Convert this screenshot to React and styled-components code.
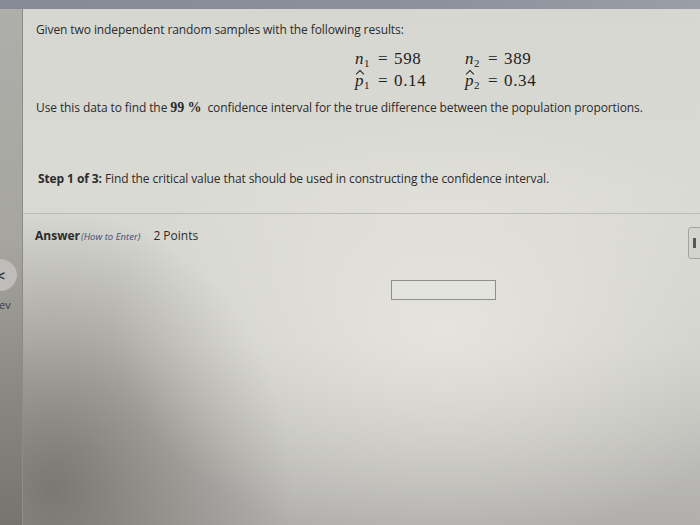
import React from "react";
import styled, { createGlobalStyle } from "styled-components";

const GlobalStyle = createGlobalStyle`
  html, body {
    margin: 0;
    padding: 0;
    width: 700px;
    height: 525px;
    overflow: hidden;
    background: #9c9a95;
  }
`;

const Screen = styled.div`
  width: 700px;
  height: 525px;
  display: flex;
  flex-direction: column;
  font-family: "Open Sans", "Liberation Sans", sans-serif;
  color: #2b2b2d;
`;

const TopBar = styled.div`
  height: 9px;
  background: linear-gradient(90deg, #858a94 0%, #8c909b 60%, #9a9ea6 100%);
`;

const Body = styled.div`
  flex: 1;
  display: flex;
`;

const LeftRail = styled.div`
  width: 22px;
  background: linear-gradient(180deg, #aeaeaa 0%, #a6a5a0 45%, #8a8782 75%, #77746f 100%);
  border-right: 1px solid #8d8c88;
  display: flex;
  flex-direction: column;
  padding-top: 250px;
  overflow: hidden;
`;

const NavCircle = styled.div`
  width: 34px;
  height: 32px;
  margin-left: -17px;
  border-radius: 50%;
  background: #bebdb9;
  display: flex;
  align-items: center;
  justify-content: flex-end;
  padding-right: 12px;
  box-sizing: border-box;
  font-size: 15px;
  font-weight: 700;
  color: #3a3a3c;
`;

const NavLabel = styled.div`
  margin-top: 6px;
  margin-left: -1px;
  font-size: 11px;
  color: #3c3c3e;
`;

const Panel = styled.div`
  flex: 1;
  position: relative;
  display: flex;
  flex-direction: column;
  background:
    radial-gradient(ellipse 330px 220px at 420px 320px, rgba(234, 232, 224, 0.8), rgba(234, 232, 224, 0) 100%),
    radial-gradient(ellipse 240px 280px at 30px 480px, rgba(112, 108, 102, 0.85), rgba(112, 108, 102, 0) 100%),
    linear-gradient(180deg, #d7d7d1 0%, #dadad4 35%, #d0d0cb 65%, #b0afac 100%);
`;

const Question = styled.section`
  padding: 13px 0 0 13px;
  display: flex;
  flex-direction: column;
`;

const Text = styled.p`
  margin: 0;
  font-size: 12px;
  letter-spacing: -0.1px;
  line-height: 16px;
`;

const MathGrid = styled.div`
  display: grid;
  grid-template-columns: 110px 80px;
  grid-auto-rows: 22px;
  align-items: center;
  margin: 10px 0 8px 319px;
  font-family: "Liberation Serif", "Times New Roman", serif;
  font-size: 17px;
  line-height: 22px;
  letter-spacing: 0.6px;
  color: #222;
  word-spacing: 1px;
`;

const Var = styled.span`
  font-style: italic;
  position: relative;
  display: inline-block;
  ${(props) =>
    props.hat &&
    `
    &::before {
      content: "";
      position: absolute;
      left: 2px;
      top: 1px;
      width: 5px;
      height: 5px;
      border-left: 1px solid #222;
      border-top: 1px solid #222;
      transform: rotate(45deg);
    }
  `}
`;

const Sub = styled.sub`
  font-size: 11px;
  font-style: normal;
  vertical-align: -3px;
  line-height: 0;
  margin-right: 2px;
`;

const Strong = styled.strong`
  font-weight: 700;
`;

const Percent = styled.strong`
  font-family: "Liberation Serif", "Times New Roman", serif;
  font-weight: 700;
  font-size: 14px;
  margin-right: 3px;
`;

const StepBlock = styled.section`
  padding: 55px 0 0 15px;
  height: 98px;
  box-sizing: border-box;
  border-bottom: 1px solid #bdbdb8;
`;

const AnswerBlock = styled.section`
  padding: 14px 0 0 12px;
  display: flex;
  flex-direction: column;
`;

const AnswerRow = styled.div`
  display: flex;
  align-items: baseline;
  font-size: 12px;
  line-height: 16px;
`;

const AnswerLabel = styled.strong`
  font-size: 12px;
  font-weight: 700;
`;

const HowTo = styled.span`
  font-size: 9.5px;
  font-style: italic;
  color: #3f4c78;
  margin-left: 1px;
  margin-right: 13px;
`;

const AnswerInput = styled.div`
  align-self: flex-start;
  margin: 35px 0 0 356px;
  width: 105px;
  height: 20px;
  box-sizing: border-box;
  border: 1px solid #8f908d;
  background: rgba(228, 230, 224, 0.6);
`;

const SideTab = styled.div`
  position: absolute;
  right: -4px;
  top: 218px;
  width: 14px;
  height: 30px;
  border: 1px solid #a4a4a0;
  border-radius: 3px;
  background: #d4d4cf;
  display: flex;
  align-items: center;
  justify-content: center;
  &::after {
    content: "";
    width: 3px;
    height: 10px;
    margin-right: 4px;
    background: #55565a;
  }
`;

const App = () => (
  <Screen>
    <GlobalStyle />
    <TopBar />
    <Body>
      <LeftRail>
        <NavCircle>&lt;</NavCircle>
        <NavLabel>ev</NavLabel>
      </LeftRail>
      <Panel>
        <Question>
          <Text>Given two independent random samples with the following results:</Text>
          <MathGrid>
            <span>
              <Var>n</Var><Sub>1</Sub> = 598
            </span>
            <span>
              <Var>n</Var><Sub>2</Sub> = 389
            </span>
            <span>
              <Var hat>p</Var><Sub>1</Sub> = 0.14
            </span>
            <span>
              <Var hat>p</Var><Sub>2</Sub> = 0.34
            </span>
          </MathGrid>
          <Text>
            Use this data to find the <Percent>99 %</Percent> confidence interval for the true difference between the population proportions.
          </Text>
        </Question>
        <StepBlock>
          <Text>
            <Strong>Step 1 of 3:</Strong> Find the critical value that should be used in constructing the confidence interval.
          </Text>
        </StepBlock>
        <AnswerBlock>
          <AnswerRow>
            <AnswerLabel>Answer</AnswerLabel>
            <HowTo>(How to Enter)</HowTo>
            <span>2 Points</span>
          </AnswerRow>
          <AnswerInput />
        </AnswerBlock>
        <SideTab />
      </Panel>
    </Body>
  </Screen>
);

export default App;
